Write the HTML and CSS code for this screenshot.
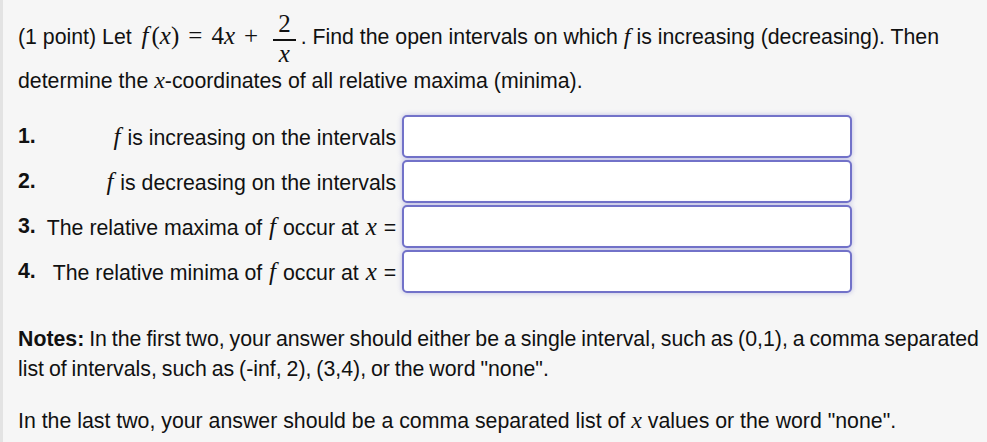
FILE: index.html
```html
<!DOCTYPE html>
<html>
<head>
<meta charset="utf-8">
<link rel="stylesheet" href="styles.css">
</head>
<body>
<div class="problem">
  <p class="intro">(1 point) Let <span class="math"><i class="fn">f</i>(<i>x</i>)<span class="rel">=</span>4<i>x</i><span class="op">+</span><span class="frac"><span class="num">2</span><span class="den"><i>x</i></span></span></span>. Find the open intervals on which <i class="mv">f</i> is increasing (decreasing). Then determine the <i class="mv">x</i>-coordinates of all relative maxima (minima).</p>
  <div class="answers">
    <b class="num-label">1.</b>
    <span class="prompt"><i class="mv">f</i> is increasing on the intervals</span>
    <span class="field"></span>
    <b class="num-label">2.</b>
    <span class="prompt"><i class="mv">f</i> is decreasing on the intervals</span>
    <span class="field"></span>
    <b class="num-label">3.</b>
    <span class="prompt">The relative maxima of <i class="mv">f</i> occur at <i class="mv">x</i> =</span>
    <span class="field"></span>
    <b class="num-label">4.</b>
    <span class="prompt">The relative minima of <i class="mv">f</i> occur at <i class="mv">x</i> =</span>
    <span class="field"></span>
  </div>
  <p class="notes"><b>Notes:</b> In the first two, your answer should either be a single interval, such as (0,1), a comma separated list of intervals, such as (-inf, 2), (3,4), or the word "none".</p>
  <p class="last">In the last two, your answer should be a comma separated list of <i class="mv">x</i> values or the word "none".</p>
</div>
</body>
</html>
```

FILE: styles.css
```css
html, body {
  margin: 0;
  padding: 0;
  background: #f6f6f6;
}
body {
  font-family: "Liberation Sans", Arial, sans-serif;
  font-size: 21.3px;
  color: #111;
}
.problem {
  border-left: 3px solid #e3e3e3;
  height: 442px;
  overflow: hidden;
  box-sizing: border-box;
  padding: 14px 0 0 15px;
}
.intro {
  margin: 0;
  line-height: 30px;
}
.math, .mv {
  font-family: "Liberation Serif", "Times New Roman", serif;
  font-size: 24px;
}
.math {
  font-size: 25px;
  padding-left: 4px;
}
.math i, i.mv {
  font-style: italic;
}
.math .fn { padding-right: 3px; }
.rel { padding: 0 9px; }
.op { padding: 0 9px; }
.frac {
  display: inline-flex;
  flex-direction: column;
  align-items: stretch;
  text-align: center;
  vertical-align: 12px;
  line-height: 20px;
  padding: 0 5px 0 6px;
}
.frac .num {
  border-bottom: 2px solid #111;
  padding: 0 5px 5px;
}
.frac .den { padding: 3px 0 1px; }
.answers {
  display: grid;
  grid-template-columns: auto auto 450px;
  column-gap: 0;
  row-gap: 2px;
  align-items: center;
  margin-top: 19px;
  width: max-content;
}
.num-label {
  padding-right: 11px;
}
.prompt {
  text-align: right;
  padding-right: 6px;
}
.prompt .mv {
  font-size: 25px;
  margin: 0 1px;
}
.field {
  height: 43px;
  box-sizing: border-box;
  border: 2px solid #7272c9;
  border-radius: 5px;
  background: #fff;
  box-shadow: 0 0 5px rgba(114, 114, 201, 0.45);
}
.notes {
  margin: 31px 0 0;
  line-height: 30px;
  word-spacing: -1px;
}
.last {
  margin: 21px 0 0;
  line-height: 30px;
}
```
